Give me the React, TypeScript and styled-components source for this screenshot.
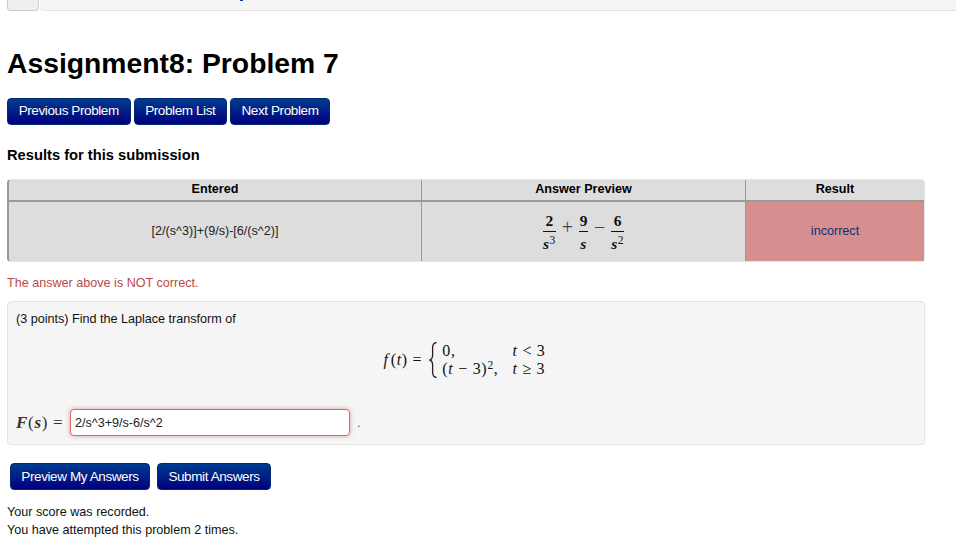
import React from "react";
import styled, { createGlobalStyle } from "styled-components";

const Global = createGlobalStyle`
  html, body { margin: 0; padding: 0; background: #fff; overflow: hidden; }
  body { font-family: "Liberation Sans", Arial, sans-serif; font-size: 12.6px; line-height: 18px; color: #222; }
`;
const Page = styled.div`width: 956px; height: 537px; overflow: hidden;`;
const TopStrip = styled.div`display: flex; height: 11px; padding-left: 7px; gap: 1px;`;
const TopTab = styled.div`
  width: 30px; height: 10px; background: #eeeeee; border: 1px solid #ccc; border-top: 0;
  border-radius: 0 0 4px 4px;
`;
const TopBar = styled.div`
  flex: 1; height: 10px; background: #f5f5f5; border-bottom: 1px solid #e3e3e3; border-radius: 0 0 0 4px;
  padding-left: 200px;
`;
const TopMark = styled.span`display: block; width: 3px; height: 1px; background: #0b3c9c;`;
const Main = styled.div`padding: 0 31px 0 7px;`;
const Title = styled.h1`
  margin: 35px 0 0; font-size: 28.3px; line-height: 34px; font-weight: 700; color: #000;
`;
const Row = styled.div<{ $gap: number; $top: number; $left?: number }>`
  display: flex; gap: ${p => p.$gap}px; margin-top: ${p => p.$top}px; margin-left: ${p => p.$left ?? 0}px;
`;
const Btn = styled.button<{ $w: number; $lift?: number }>`
  width: ${p => p.$w}px; height: 27px; padding: 0 0 ${p => p.$lift ?? 0}px; border: 1px solid #002a70; border-radius: 4px;
  background: linear-gradient(to bottom, #003c8f, #00007f); color: #fff;
  font-family: "Liberation Sans", Arial, sans-serif; font-size: 13.5px; letter-spacing: -0.4px;
  line-height: 18px; text-shadow: 0 -1px 0 rgba(0,0,0,.25);
`;
const Sub = styled.h2`margin: 20px 0 0; font-size: 14.7px; line-height: 20px; font-weight: 700; color: #000;`;
const Results = styled.table`
  margin-top: 14px; width: 918px; border-collapse: separate; border-spacing: 0; table-layout: fixed;
  background: #dddddd; color: #222; border: 1px solid #e6e6e6; border-left: 2px solid #999; border-radius: 4px;
`;
const Th = styled.th<{ $w?: number }>`
  box-sizing: border-box; height: 22px; padding: 0 0 3px; font-size: 12.6px; line-height: 16px; font-weight: 700;
  color: #000; text-align: center; border-bottom: 2px solid #999; width: ${p => (p.$w ? p.$w + "px" : "auto")};
  & + & { border-left: 1px solid #999; }
`;
const Td = styled.td<{ $bad?: boolean }>`
  box-sizing: border-box; height: 59px; padding: 0 0 2px; font-size: 12.6px; text-align: center;
  color: ${p => (p.$bad ? "#0a2f7f" : "#222")};
  background: ${p => (p.$bad ? "#d68f8f" : "transparent")};
  & + & { border-left: 1px solid #999; }
`;
const Msg = styled.div`margin-top: 11px; font-size: 12.6px; line-height: 20px; color: #b94a48;`;
const Well = styled.div`
  margin-top: 8px; height: 144px; box-sizing: border-box; padding: 8px 8px 7px; background: #f5f5f5;
  border: 1px solid #e3e3e3; border-radius: 4px; display: flex; flex-direction: column;
`;
const WellText = styled.div`font-size: 12.6px; line-height: 18px; color: #111;`;
const MathLine = styled.div`
  display: flex; justify-content: center; align-items: center; margin-top: 13px; height: 38px;
  padding-right: 3px; font-family: "Liberation Serif", serif; font-size: 16px; letter-spacing: .7px; color: #111;
`;
const I = styled.i`font-family: "Liberation Serif", serif; font-style: italic;`;
const BraceSvg = styled.svg`width: 8px; height: 36px; margin: 0 5px 0 7px; flex: none;`;
const Cases = styled.div`
  display: grid; grid-template-columns: auto auto; column-gap: 14px; line-height: 18px; white-space: pre;
`;
const AnswerRow = styled.div`display: flex; align-items: center; margin-top: 30px; height: 27px;`;
const Label = styled.span`
  font-family: "Liberation Serif", serif; font-size: 17px; letter-spacing: .7px; width: 54px; color: #333; white-space: nowrap;
`;
const Input = styled.input`
  width: 280px; height: 27px; box-sizing: border-box; padding: 0 4px; border: 1px solid #d26a6a; border-radius: 4px;
  background: #fff; font-family: "Liberation Sans", Arial, sans-serif; font-size: 12.6px; color: #222;
  box-shadow: 0 0 4px rgba(210,80,80,.55); outline: none;
`;
const Dot = styled.span`margin-left: 7px; font-size: 12.6px; color: #555;`;
const Foot = styled.div`margin-top: 13px; font-size: 12.6px; line-height: 18px; color: #111;`;
const Frac = styled.span`
  display: inline-flex; flex-direction: column; align-items: stretch; vertical-align: middle; text-align: center;
  margin-top: 2px; font-family: "Liberation Serif", serif; font-size: 15.5px; line-height: 15px; color: #111;
`;
const Num = styled.span`font-weight: 700; padding: 0 0 3px; border-bottom: 1px solid #111; min-width: 9px;`;
const Den = styled.span`font-style: italic; font-weight: 700; padding-top: 4px; letter-spacing: .5px;`;
const Sup = styled.sup`font-size: 11.5px; line-height: 0; font-style: normal; font-weight: 400; vertical-align: 5px;`;
const Op = styled.span`font-family: "Liberation Serif", serif; font-size: 20px; margin: 0 6px; color: #444;`;

export default function App() {
  return (
    <Page>
      <Global />
      <TopStrip>
        <TopTab />
        <TopBar><TopMark /></TopBar>
      </TopStrip>
      <Main>
        <Title>Assignment8: Problem 7</Title>
        <Row $gap={3} $top={18}>
          <Btn $w={123.5} $lift={2}>Previous Problem</Btn>
          <Btn $w={93.5} $lift={2}>Problem List</Btn>
          <Btn $w={100} $lift={2}>Next Problem</Btn>
        </Row>
        <Sub>Results for this submission</Sub>
        <Results>
          <thead>
            <tr>
              <Th $w={412}>Entered</Th>
              <Th $w={324}>Answer Preview</Th>
              <Th>Result</Th>
            </tr>
          </thead>
          <tbody>
            <tr>
              <Td>[2/(s^3)]+(9/s)-[6/(s^2)]</Td>
              <Td>
                <Frac><Num>2</Num><Den>s<Sup>3</Sup></Den></Frac>
                <Op>+</Op>
                <Frac><Num>9</Num><Den>s</Den></Frac>
                <Op>−</Op>
                <Frac><Num>6</Num><Den>s<Sup>2</Sup></Den></Frac>
              </Td>
              <Td $bad>incorrect</Td>
            </tr>
          </tbody>
        </Results>
        <Msg>The answer above is NOT correct.</Msg>
        <Well>
          <WellText>(3 points) Find the Laplace transform of</WellText>
          <MathLine>
            <span><I>f</I>{"\u200a"}(<I>t</I>){"\u00a0"}=</span>
            <BraceSvg viewBox="0 0 8 36" fill="none" stroke="#222" strokeWidth="1.3">
              <path d="M7.5 .6C4.6 .8 3.6 3 3.6 6V13C3.6 16 2.6 17.6 .4 18C2.6 18.4 3.6 20 3.6 23V30C3.6 33 4.6 35.2 7.5 35.4" />
            </BraceSvg>
            <Cases>
              <span>0,</span><span><I>t</I> &lt; 3</span>
              <span>(<I>t</I> − 3)<Sup>2</Sup>,</span><span><I>t</I> ≥ 3</span>
            </Cases>
          </MathLine>
          <AnswerRow>
            <Label><I><b>F</b></I>(<I><b>s</b></I>) =</Label>
            <Input readOnly value="2/s^3+9/s-6/s^2" />
            <Dot>.</Dot>
          </AnswerRow>
        </Well>
        <Row $gap={7} $top={18} $left={3}>
          <Btn $w={140}>Preview My Answers</Btn>
          <Btn $w={114}>Submit Answers</Btn>
        </Row>
        <Foot>Your score was recorded.<br />You have attempted this problem 2 times.</Foot>
      </Main>
    </Page>
  );
}
